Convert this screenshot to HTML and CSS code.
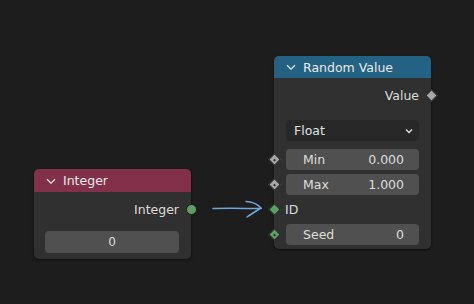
FILE: index.html
```html
<!DOCTYPE html>
<html>
<head>
<meta charset="utf-8">
<link rel="stylesheet" href="styles.css">
</head>
<body>
<div class="canvas">
  <div class="node node-int">
    <div class="header header-int">
      <svg class="chev" width="10" height="7" viewBox="0 0 10 7"><path d="M1 1.2 L5 5.2 L9 1.2" fill="none" stroke="#e6e6e6" stroke-width="1.3"/></svg>
      <span>Integer</span>
    </div>
    <div class="body body-int">
      <div class="row out">
        <span>Integer</span>
        <span class="sock circle green"></span>
      </div>
      <div class="field center">0</div>
    </div>
  </div>

  <svg class="arrow" width="56" height="24" viewBox="0 0 56 24">
    <path d="M1 10.5 C18 10 34 10.5 49 10.5" fill="none" stroke="#6fa6d4" stroke-width="1.5" stroke-linecap="round"/>
    <path d="M34 3.5 C40 3.5 46 7 49 10 C45 12.5 40 15.5 35 19" fill="none" stroke="#6fa6d4" stroke-width="1.5" stroke-linecap="round"/>
  </svg>

  <div class="node node-rand">
    <div class="header header-rand">
      <svg class="chev" width="10" height="7" viewBox="0 0 10 7"><path d="M1 1.2 L5 5.2 L9 1.2" fill="none" stroke="#e6e6e6" stroke-width="1.3"/></svg>
      <span>Random Value</span>
    </div>
    <div class="body body-rand">
      <div class="row out">
        <span>Value</span>
        <span class="sock diamond grey"></span>
      </div>
      <div class="dropdown">
        <span>Float</span>
        <svg width="8" height="6" viewBox="0 0 8 6"><path d="M1 1.5 L4 4.5 L7 1.5" fill="none" stroke="#e0e0e0" stroke-width="1.4"/></svg>
      </div>
      <div class="inputs">
        <div class="row in">
          <span class="sock diamond grey dot"></span>
          <div class="field"><span>Min</span><span>0.000</span></div>
        </div>
        <div class="row in">
          <span class="sock diamond grey dot"></span>
          <div class="field"><span>Max</span><span>1.000</span></div>
        </div>
        <div class="row in">
          <span class="sock diamond green"></span>
          <span class="label">ID</span>
        </div>
        <div class="row in">
          <span class="sock diamond green dot"></span>
          <div class="field"><span>Seed</span><span>0</span></div>
        </div>
      </div>
    </div>
  </div>
</div>
</body>
</html>
```

FILE: styles.css
```css
* { box-sizing: border-box; }
html, body {
  margin: 0;
  padding: 0;
  width: 474px;
  height: 304px;
  overflow: hidden;
  background: #1d1d1d;
}
.canvas {
  position: relative;
  width: 474px;
  height: 304px;
  background: #1d1d1d;
  font-family: "DejaVu Sans", sans-serif;
  font-size: 12px;
  color: #dcdcdc;
}
.node {
  position: absolute;
  width: 157px;
  background: #303030;
  border-radius: 5px;
  box-shadow: 0 1px 3px rgba(0,0,0,0.6);
}
.node-int { left: 34px; top: 169px; height: 90px; }
.node-rand { left: 274px; top: 56px; height: 193px; }
.header {
  display: flex;
  align-items: center;
  gap: 7px;
  padding-left: 12px;
  color: #e8e8e8;
  border-radius: 5px 5px 0 0;
  font-size: 12.5px;
}
.header-int { height: 23px; background: #83314a; }
.header-rand { height: 22px; background: #246283; }
.chev { flex: none; margin-top: 1px; }
.body { display: flex; flex-direction: column; }
.body-int { padding: 7px 12px 6px 11px; }
.body-int .field { margin-top: 11px; height: 22px; flex: none; }
.body-rand { padding: 7px 12px 4px 12px; }
.row {
  position: relative;
  display: flex;
  align-items: center;
  height: 21px;
  font-size: 12.5px;
}
.row.out { justify-content: flex-end; }
.field {
  flex: 1;
  display: flex;
  justify-content: space-between;
  align-items: center;
  height: 21px;
  background: #505050;
  border-radius: 4px;
  padding: 0 15px 0 17px;
  color: #dedede;
}
.field.center { justify-content: center; padding: 0; }
.dropdown {
  margin-top: 14px;
  height: 21px;
  display: flex;
  justify-content: space-between;
  align-items: center;
  background: #282828;
  border-radius: 4px;
  padding: 0 6px 0 8px;
  color: #e0e0e0;
  font-size: 12.5px;
}
.inputs {
  margin-top: 8px;
  display: flex;
  flex-direction: column;
  gap: 4px;
}
.label { margin-left: -1px; }
.sock {
  position: absolute;
  top: 50%;
}
.sock.diamond {
  width: 9px;
  height: 9px;
  margin-top: -4.5px;
  transform: rotate(45deg);
  border: 1px solid #1a1a1a;
}
.row.in .sock.diamond { left: -16.5px; }
.row.out .sock.diamond { right: -16.5px; }
.sock.circle {
  width: 11px;
  height: 11px;
  margin-top: -5.5px;
  right: -17.5px;
  border-radius: 50%;
  border: 1px solid #1a1a1a;
}
.grey { background: #a8a8a8; }
.green { background: #5f9e63; }
.sock.dot::after {
  content: "";
  position: absolute;
  left: 2.5px;
  top: 2.5px;
  width: 2px;
  height: 2px;
  background: #2a2a2a;
}
.arrow {
  position: absolute;
  left: 212px;
  top: 198px;
}
```
